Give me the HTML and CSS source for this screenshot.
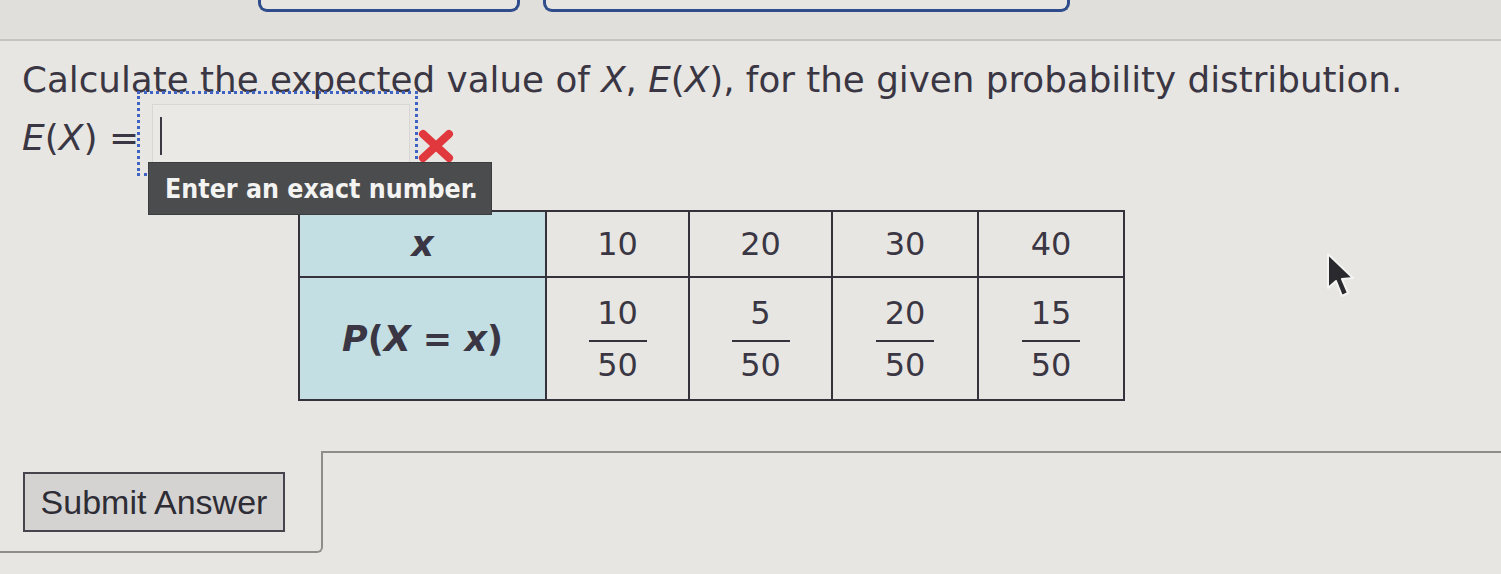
FILE: index.html
```html
<!DOCTYPE html>
<html lang="en">
<head>
<meta charset="utf-8">
<title>Expected value</title>
<link rel="stylesheet" href="styles.css">
</head>
<body>
<div class="page">
  <header class="topbar">
    <div class="tab-btn tab-a"></div>
    <div class="tab-btn tab-b"></div>
  </header>
  <main class="content">
    <p class="question">Calculate the expected value of <i>X</i>, <i>E</i>(<i>X</i>), for the given probability distribution.</p>
    <div class="answer-row">
      <span class="label"><i>E</i>(<i>X</i>) =</span>
      <div class="field">
        <span class="caret"></span>
        <div class="tooltip">Enter an exact number.</div>
      </div>
      <svg class="wrong" viewBox="0 0 38 36" width="38" height="36" aria-hidden="true">
        <path d="M6 6 L32 30 M32 6 L6 30" stroke="#e0383c" stroke-width="8" stroke-linecap="round" fill="none"/>
      </svg>
    </div>
    <table class="dist">
      <tr class="row-x">
        <th class="head"><i>x</i></th>
        <td>10</td>
        <td>20</td>
        <td>30</td>
        <td>40</td>
      </tr>
      <tr class="row-p">
        <th class="head"><i>P</i>(<i>X</i> = <i>x</i>)</th>
        <td><span class="frac"><span class="num">10</span><span class="den">50</span></span></td>
        <td><span class="frac"><span class="num">5</span><span class="den">50</span></span></td>
        <td><span class="frac"><span class="num">20</span><span class="den">50</span></span></td>
        <td><span class="frac"><span class="num">15</span><span class="den">50</span></span></td>
      </tr>
    </table>
  </main>
  <section class="bottom">
    <div class="submit-area"><button class="submit" type="button">Submit Answer</button></div>
    <div class="panel"></div>
  </section>
  <svg class="cursor" viewBox="0 0 30 48" width="30" height="48" aria-hidden="true">
    <path d="M3 2 L3 36 L11 29 L17 44 L23 41 L17 27 L28 26 Z" fill="#2a2a2e" stroke="#f4f4f2" stroke-width="2" stroke-linejoin="round"/>
  </svg>
</div>
</body>
</html>
```

FILE: styles.css
```css
html, body {
  margin: 0;
  padding: 0;
}
body {
  background: #e8e6e2;
  color: #3a3643;
  font-family: "DejaVu Sans", Verdana, sans-serif;
  width: 1501px;
  height: 574px;
  overflow: hidden;
}
.page {
  position: relative;
  width: 1501px;
  height: 574px;
}
.topbar {
  display: flex;
  gap: 23px;
  height: 39px;
  padding-left: 258px;
  background: #e1dfdb;
  border-bottom: 2px solid #c6c4c0;
  box-sizing: content-box;
}
.tab-btn {
  height: 9px;
  background: #e6e5e2;
  border: 3px solid #2f4c8c;
  border-top: none;
  border-radius: 0 0 9px 9px;
}
.tab-a { width: 256px; }
.tab-b { width: 521px; }

.content {
  padding-left: 22px;
}
.question {
  margin: 18px 0 0 0;
  font-size: 35.7px;
  line-height: 42px;
  white-space: nowrap;
}
.answer-row {
  display: flex;
  align-items: flex-start;
  margin-top: 3px;
  height: 59px;
  position: relative;
  z-index: 2;
}
.label {
  flex: 0 0 130px;
  font-size: 36px;
  line-height: 42px;
  margin-top: 13px;
  white-space: nowrap;
}
.field {
  position: relative;
  width: 258px;
  height: 59px;
  box-sizing: border-box;
  border: 1px solid #d9d7d3;
  background: #ebe9e6;
}
.field::before {
  content: "";
  position: absolute;
  left: -16px;
  right: -9px;
  top: -14px;
  bottom: -14px;
  border: 3px dotted #3f63c2;
}
.caret {
  position: absolute;
  left: 7px;
  top: 12px;
  width: 2px;
  height: 38px;
  background: #3a3840;
}
.tooltip {
  position: absolute;
  left: -5px;
  top: 57px;
  width: 344px;
  height: 53px;
  box-sizing: border-box;
  padding: 3px 0 0 16px;
  background: #4b4c4e;
  border: 1px solid #3c3d3f;
  color: #f3f3f1;
  font-family: "DejaVu Sans Condensed", "DejaVu Sans", sans-serif;
  font-weight: bold;
  font-size: 26.5px;
  line-height: 46px;
  white-space: nowrap;
}
.wrong {
  margin-left: 7px;
  margin-top: 24px;
}

.dist {
  margin: 47px 0 0 276px;
  border-collapse: collapse;
  border: 2px solid #36323c;
  font-size: 32px;
}
.dist th, .dist td {
  border: 2px solid #36323c;
  padding: 0;
  text-align: center;
  vertical-align: middle;
}
.dist .head {
  width: 245px;
  background: #c3dfe3;
  font-weight: bold;
  font-size: 35px;
}
.dist td:nth-child(2), .dist td:nth-child(3) { width: 141px; }
.dist td:nth-child(4), .dist td:nth-child(5) { width: 144px; }
.row-x th, .row-x td { height: 64px; }
.row-p th, .row-p td { height: 121px; }

.frac {
  display: inline-flex;
  flex-direction: column;
  align-items: center;
  vertical-align: middle;
}
.num, .den {
  display: block;
  line-height: 32px;
  padding: 0 8px;
  min-width: 42px;
}
.num {
  padding-bottom: 11px;
  border-bottom: 2px solid #36323c;
}
.den {
  padding-top: 7px;
}

.bottom {
  display: flex;
  margin-top: 50px;
}
.submit-area {
  flex: 0 0 323px;
  box-sizing: border-box;
  padding: 21px 0 19px 23px;
  border-bottom: 2px solid #8f8c89;
  border-right: 2px solid #8f8c89;
  border-bottom-right-radius: 6px;
}
.submit {
  display: block;
  width: 262px;
  height: 60px;
  box-sizing: border-box;
  background: #d4d3d1;
  border: 2px solid #48434c;
  border-radius: 0;
  color: #2e2c35;
  font-family: "Liberation Sans", Arial, sans-serif;
  font-size: 34px;
  padding: 0;
}
.panel {
  flex: 1;
  border-top: 2px solid #8f8c89;
  height: 100px;
}
.cursor {
  position: absolute;
  left: 1325px;
  top: 252px;
}
```
